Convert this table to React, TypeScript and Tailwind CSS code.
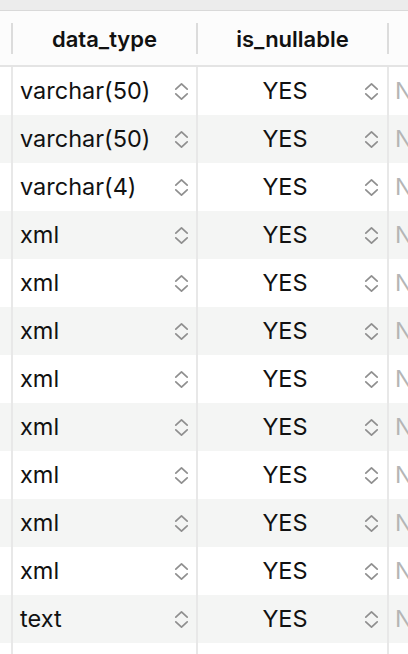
const rows = [
  'varchar(50)',
  'varchar(50)',
  'varchar(4)',
  'xml',
  'xml',
  'xml',
  'xml',
  'xml',
  'xml',
  'xml',
  'xml',
  'text',
  '',
];

function Stepper() {
  return (
    <svg width="15" height="19" viewBox="0 0 15 19" fill="none" className="shrink-0">
      <path d="M1.8 7.2 L7.5 1.8 L13.2 7.2" stroke="#8f8f8f" strokeWidth="1.7" strokeLinecap="round" strokeLinejoin="round" />
      <path d="M1.8 11.8 L7.5 17.2 L13.2 11.8" stroke="#8f8f8f" strokeWidth="1.7" strokeLinecap="round" strokeLinejoin="round" />
    </svg>
  );
}

export default function App() {
  return (
    <div className="w-[408px] h-[654px] overflow-hidden bg-white font-['Inter',sans-serif] text-[#111]">
      <div className="h-[11px] bg-[#ececec] border-b border-[#d9d9d9]" />

      {/* header */}
      <div className="h-[56px] bg-[#fcfcfc] border-b-2 border-[#e4e4e4] grid grid-cols-[13px_185px_191px_1fr] items-center">
        <div className="h-[31px] border-r-2 border-[#dcdcdc]" />
        <div className="h-[31px] border-r-2 border-[#dcdcdc] flex items-center justify-center pt-[3px] text-[22px] font-semibold">
          data_type
        </div>
        <div className="h-[31px] border-r-2 border-[#dcdcdc] flex items-center justify-center pt-[3px] text-[22px] font-semibold">
          is_nullable
        </div>
        <div />
      </div>

      {/* body */}
      {rows.map((type, i) => (
        <div
          key={i}
          className={`h-[48px] grid grid-cols-[13px_185px_191px_1fr] ${i % 2 === 1 ? 'bg-[#f4f5f4]' : 'bg-white'}`}
        >
          <div className="border-r-2 border-[#e8e8e8]" />
          <div className="border-r-2 border-[#e8e8e8] flex items-center pl-[7px] pr-[7px]">
            {type && (
              <>
                <span className="flex-1 text-[23.5px] leading-none">{type}</span>
                <Stepper />
              </>
            )}
          </div>
          <div className="border-r-2 border-[#e8e8e8] flex items-center pl-[8px] pr-[8px]">
            {type && (
              <>
                <span className="flex-1 text-center text-[23.5px] leading-none">YES</span>
                <Stepper />
              </>
            )}
          </div>
          <div className="flex items-center pl-[6px] overflow-hidden">
            {type && <span className="text-[23.5px] leading-none text-[#b5b5b5]">N</span>}
          </div>
        </div>
      ))}
    </div>
  );
}
